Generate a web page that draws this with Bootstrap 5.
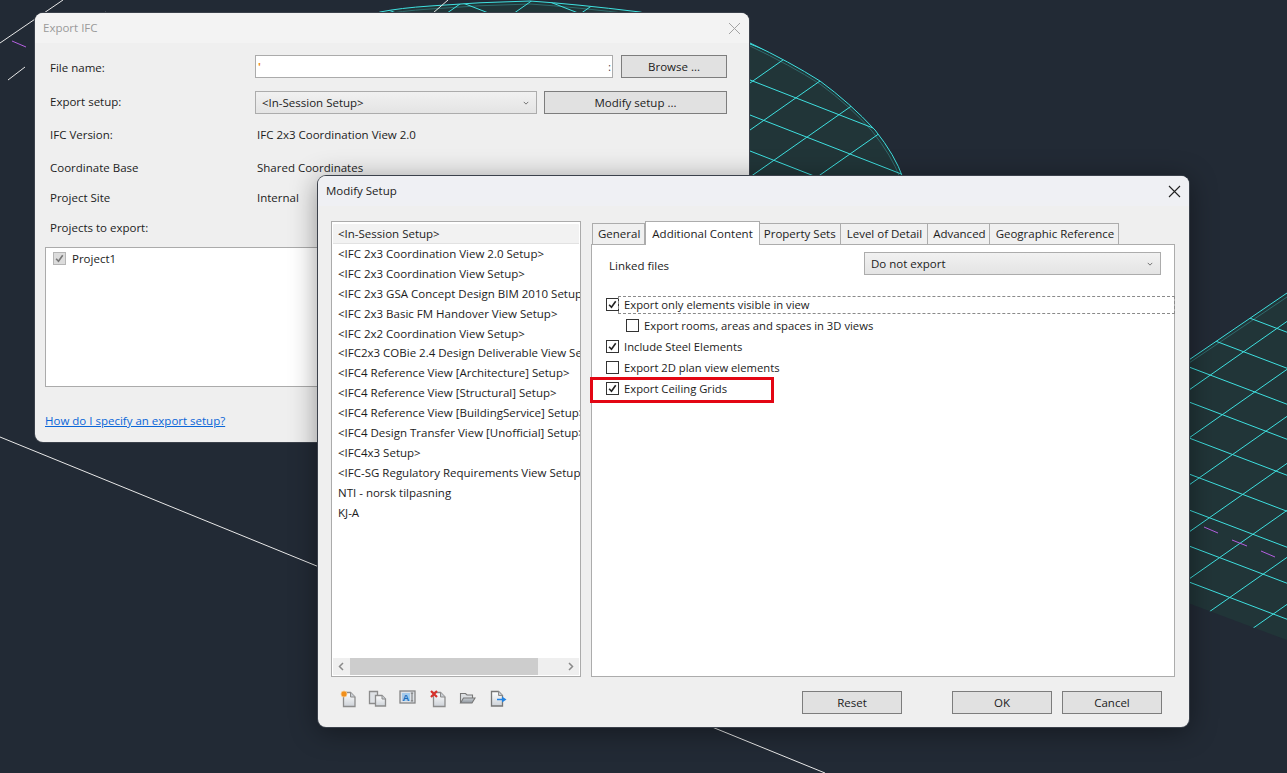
<!DOCTYPE html>
<html lang="en">
  <head>
    <meta charset="UTF-8" />
    <title>Export IFC - Modify Setup</title>
    <link
      href="https://cdn.jsdelivr.net/npm/bootstrap@5.3.0/dist/css/bootstrap.min.css"
      rel="stylesheet"
    />
    <style>
      html, body { margin: 0; background: #222a35; }
      body {
        font-family: "Open Sans", "Noto Sans", "Liberation Sans", sans-serif;
        font-size: 11.5px;
        line-height: 16px;
        color: #1c1c1c;
      }
      .desk { width: 1287px; height: 773px; overflow: hidden; }
      .model { left: 0; top: 0; }

      .win { background: #efefef; border-radius: 8px; }
      .win-back { left: 35px; top: 13px; width: 714px; height: 429px; box-shadow: 0 0 0 1px #3b414b; }
      .win-front { left: 318px; top: 176px; width: 871px; height: 551px; box-shadow: 0 0 0 1px #3b414b, 0 4px 28px rgba(0, 0, 0, .42); }
      .win-head { height: 30px; padding: 0 7px 0 8px; border-radius: 8px 8px 0 0; }
      .win-back .win-head { background: #f3f3f3; color: #9a9a9a; }
      .win-front .win-head { background: #eff0f4; color: #222; }
      .win-x { width: 15px; height: 15px; }

      .exp-body { padding: 12px 21px 0 10px; }
      .exp-row { height: 22px; }
      .exp-label { width: 210px; padding-left: 5px; flex: none; }
      .label-low { padding-top: 3px; }
      .label-high { padding-bottom: 2px; }
      .exp-value { padding-left: 2px; }
      .gap-file { margin-top: 13px; height: 23px; }
      .gap-a { margin-top: 10px; }
      .gap-b { margin-top: 11px; }
      .gap-c { margin-top: 8px; }
      .exp-file { width: 358px; height: 23px; background: #fff; border: 1px solid #ababab; padding: 0 1px 0 2px; }
      .caret-tick { color: #f08a10; font-size: 11px; font-weight: 700; }
      .caret-dots { color: #333; font-size: 10px; }

      .win-btn {
        height: 23px; padding: 0; font-size: 11.5px; line-height: 20px; color: #1c1c1c;
        background: #e1e1e1; border: 1px solid #7d7d7d; border-radius: 0;
      }
      .win-btn:hover { background: #e1e1e1; color: #1c1c1c; border-color: #7d7d7d; }
      .btn-browse { width: 106px; margin-left: 8px; }
      .btn-modify { width: 183px; margin-left: 7px; }
      .btn-dialog { width: 100px; }

      .win-select {
        height: 23px; padding: 0 20px 0 6px; font-size: 11.5px; line-height: 20px; color: #1c1c1c;
        border: 1px solid #acacac; border-radius: 0;
        background-color: #e8e8e8;
        background-image: url("data:image/svg+xml,%3Csvg xmlns='http://www.w3.org/2000/svg' viewBox='0 0 8 5'%3E%3Cpath d='M1 1l3 3 3-3' fill='none' stroke='%23666' stroke-width='1.2'/%3E%3C/svg%3E"), linear-gradient(#f1f1f1, #e4e4e4);
        background-repeat: no-repeat, no-repeat;
        background-position: right 7px center, 0 0;
        background-size: 6px 4px, 100% 100%;
      }
      .sel-setup { width: 282px; }
      .sel-linked { width: 297px; }

      .proj-box { height: 140px; background: #fff; border: 1px solid #ababab; margin-top: 8px; padding: 0 0 0 7px; }
      .proj-box .chk-line .form-check-input { margin-right: 6px; opacity: 1; }
      .help-link { display: block; margin-top: 26px; color: #0a66d8; }

      .set-body { padding: 15px 14px 0 13px; }
      .set-main { height: 456px; }
      .set-list { width: 250px; flex: none; margin-right: 10px; border: 1px solid #ababab; background: #fff; }
      .set-items { padding: 2px 1px 0; overflow: hidden; flex: 1 1 auto; }
      .set-items .list-group-item {
        background: transparent; border: 0; padding: 0 0 0 5px; height: 19.9px; line-height: 19.9px;
        white-space: nowrap; color: #1c1c1c; border-radius: 0; font-size: 11.5px;
      }
      .set-items .list-group-item.picked { background: #f2f2f2; border-bottom: 1px solid #e2e2e2; height: 20px; }
      .h-scroll { height: 17px; margin: 0 1px 1px; background: #efefef; }
      .h-thumb { width: 188px; background: #cdcdcd; }
      .h-arrow { width: 17px; }

      .set-tabs { flex: 1 1 auto; min-width: 0; }
      .tab-row { height: 23px; border: 0; padding-left: 1px; flex-wrap: nowrap; }
      .tab-row .nav-link {
        height: 21px; margin: 2px 0 0 0; padding: 0 4px; line-height: 19px; color: #1c1c1c; white-space: nowrap;
        background: #f0f0f0; border: 1px solid #acacac; border-bottom: 0; border-left-width: 0; border-radius: 0;
      }
      .tab-row .nav-link.tab-general { padding: 0 4px 0 5px; }
      .tab-row .nav-link.tab-level { padding: 0 5px 0 6px; }
      .tab-row .nav-link.tab-adv { padding: 0 3px 0 5px; }
      .tab-row .nav-link.tab-geo { padding: 0 4px 0 6px; }
      .tab-row .nav-item:first-child .nav-link { border-left-width: 1px; }
      .tab-row .nav-link.active {
        height: 24px; margin-top: 0; line-height: 23px; padding: 0 6px; position: relative; z-index: 1;
        background: #fff; border: 1px solid #acacac; border-bottom: 0; color: #1c1c1c;
      }
      .tab-body { height: 433px; background: #fff; border: 1px solid #acacac; padding: 7px 13px 0 17px; }
      .linked-row { height: 23px; }
      .linked-name { width: 76px; flex: none; padding-top: 4px; }
      .chk-list { margin: 19px -13px 0 -3px; }
      .chk-line { height: 21px; display: flex; align-items: center; margin: 0; padding: 0; min-height: 0; }
      .chk-line .form-check-input { float: none; margin: 0 5px 0 0; flex: none; }
      .chk-line.sub { padding-left: 20px; }
      .chk-text { flex: 1 1 auto; height: 16px; line-height: 15px; font-size: 11.25px; }
      .chk-text.focused { outline: 1px dashed #8a8a8a; margin-left: -5px; padding-left: 5px; }

      .form-check-input[type=checkbox] {
        width: 13px; height: 13px; border-radius: 0; border: 1px solid #333; background-color: #fff;
      }
      .form-check-input[type=checkbox]:checked {
        background-color: #fff; border-color: #333;
        background-image: url("data:image/svg+xml,%3Csvg xmlns='http://www.w3.org/2000/svg' viewBox='0 0 13 13'%3E%3Cpath d='M2.5 6.8l2.8 3 5-7.2' fill='none' stroke='%23222' stroke-width='1.9'/%3E%3C/svg%3E");
        background-size: 100% 100%;
      }
      .proj-box .form-check-input[type=checkbox]:checked {
        background-color: #dcdcdc; border-color: #b5b5b5;
        background-image: url("data:image/svg+xml,%3Csvg xmlns='http://www.w3.org/2000/svg' viewBox='0 0 13 13'%3E%3Cpath d='M2.5 6.8l2.8 3 5-7.2' fill='none' stroke='%23777' stroke-width='1.9'/%3E%3C/svg%3E");
      }
      .red-note { left: 272px; top: 201px; width: 184px; height: 26px; border: 3px solid #e30613; pointer-events: none; }

      .set-foot { height: 38px; padding: 12px 13px 0 6px; }
      .tool-set { gap: 10px; }
      .tool-ico { width: 20px; height: 20px; display: block; }
      .foot-btns { margin-top: 2px; }
      .foot-reset { margin-right: 50px; }
      .foot-ok { margin-right: 10px; }
    </style>
  </head>
  <body>
    <div class="desk position-relative">
      <!-- model drawn behind the dialogs -->
      <svg class="model position-absolute" id="model" width="1287" height="773" viewBox="0 0 1287 773">
        <defs>
          <clipPath id="clipRound"><path d="M340 30 L380 12 Q400 8 430 6 Q480 2 530 1 Q575 4 640 12 Q700 25 750 43 Q790 62 820 81 Q850 103 875 130 Q895 155 903 178 L903 300 L340 300 Z" /></clipPath>
          <clipPath id="clipSide"><path d="M1180 366 L1287 293 L1287 640 L1180 600 Z" /></clipPath>
          <linearGradient id="docFill" x1="0" y1="0" x2="0" y2="1">
            <stop offset="0" stop-color="#ffffff" />
            <stop offset="1" stop-color="#cdd2d8" />
          </linearGradient>
          <linearGradient id="folderFill" x1="0" y1="0" x2="0" y2="1">
            <stop offset="0" stop-color="#c9ced3" />
            <stop offset="1" stop-color="#8e969e" />
          </linearGradient>
        </defs>
        <path d="M340 30 L380 12 Q400 8 430 6 Q480 2 530 1 Q575 4 640 12 Q700 25 750 43 Q790 62 820 81 Q850 103 875 130 Q895 155 903 178 L903 300 L340 300 Z" fill="#213538" stroke="#3fe0e0" stroke-width="1" />
        <path d="M340 33 L380 15 Q400 11 430 9 Q480 5 530 4 Q575 7 640 15 Q700 28 750 46 Q790 65 820 84 Q850 106 872 131 Q892 156 900 178" fill="none" stroke="#2f6a6c" />
        <path d="M1180 366 L1287 293 L1287 640 L1180 600 Z" fill="#213538" />
        <path d="M1180 366 L1287 293" stroke="#3fe0e0" fill="none" />
        <path d="M1189 363 L1287 297" stroke="#2f6a6c" fill="none" />
        <g id="gridRound" clip-path="url(#clipRound)" stroke="#3fe0e0" stroke-width="1"></g>
        <g id="gridSide" clip-path="url(#clipSide)" stroke="#3fe0e0" stroke-width="1"></g>
        <g stroke="#e8e8e8" stroke-width="1" fill="none">
          <path d="M0 43 L63 0" />
          <path d="M8 80 L25 67" />
          <path d="M100 16 L106 12" />
          <path d="M448 0 L433 13" />
          <path d="M0 437 L825 773" />
        </g>
        <g stroke="#b45fe0" stroke-width="1" fill="none">
          <path d="M12 41 L26 47" />
          <path d="M1204 527 L1218 533" />
          <path d="M1232 540 L1247 546" />
          <path d="M1261 551 L1275 557" />
        </g>
      </svg>

      <!-- Export IFC -->
      <div class="win win-back position-absolute">
        <div class="win-head d-flex align-items-center justify-content-between">
          <span>Export IFC</span>
          <svg class="win-x" viewBox="0 0 15 15"><path d="M2 2l11 11M13 2L2 13" stroke="#a3a3a3" stroke-width="1" fill="none" /></svg>
        </div>
        <div class="exp-body">
          <div class="d-flex align-items-center gap-file mt-0">
            <div class="exp-label label-low">File name:</div>
            <div class="exp-file d-flex align-items-center justify-content-between">
              <span class="caret-tick">'</span><span class="caret-dots">:</span>
            </div>
            <button type="button" class="btn win-btn btn-browse">Browse ...</button>
          </div>
          <div class="d-flex align-items-center gap-file">
            <div class="exp-label label-high">Export setup:</div>
            <select class="form-select win-select sel-setup"><option>&lt;In-Session Setup&gt;</option></select>
            <button type="button" class="btn win-btn btn-modify">Modify setup ...</button>
          </div>
          <div class="d-flex align-items-center exp-row gap-a">
            <div class="exp-label">IFC Version:</div>
            <div class="exp-value">IFC 2x3 Coordination View 2.0</div>
          </div>
          <div class="d-flex align-items-center exp-row gap-b">
            <div class="exp-label">Coordinate Base</div>
            <div class="exp-value">Shared Coordinates</div>
          </div>
          <div class="d-flex align-items-center exp-row gap-c">
            <div class="exp-label">Project Site</div>
            <div class="exp-value">Internal</div>
          </div>
          <div class="d-flex align-items-center exp-row gap-c">
            <div class="exp-label">Projects to export:</div>
          </div>
          <div class="proj-box">
            <div class="chk-line">
              <input class="form-check-input" type="checkbox" checked disabled />
              <span>Project1</span>
            </div>
          </div>
          <a class="help-link" href="#">How do I specify an export setup?</a>
        </div>
      </div>

      <!-- Modify Setup -->
      <div class="win win-front position-absolute">
        <div class="win-head d-flex align-items-center justify-content-between">
          <span>Modify Setup</span>
          <svg class="win-x" viewBox="0 0 15 15"><path d="M2 2l11 11M13 2L2 13" stroke="#222" stroke-width="1.1" fill="none" /></svg>
        </div>
        <div class="set-body">
          <div class="d-flex set-main">
            <div class="set-list d-flex flex-column">
              <div class="list-group set-items">
                <div class="list-group-item picked">&lt;In-Session Setup&gt;</div>
                <div class="list-group-item">&lt;IFC 2x3 Coordination View 2.0 Setup&gt;</div>
                <div class="list-group-item">&lt;IFC 2x3 Coordination View Setup&gt;</div>
                <div class="list-group-item">&lt;IFC 2x3 GSA Concept Design BIM 2010 Setup&gt;</div>
                <div class="list-group-item">&lt;IFC 2x3 Basic FM Handover View Setup&gt;</div>
                <div class="list-group-item">&lt;IFC 2x2 Coordination View Setup&gt;</div>
                <div class="list-group-item">&lt;IFC2x3 COBie 2.4 Design Deliverable View Setup&gt;</div>
                <div class="list-group-item">&lt;IFC4 Reference View [Architecture] Setup&gt;</div>
                <div class="list-group-item">&lt;IFC4 Reference View [Structural] Setup&gt;</div>
                <div class="list-group-item">&lt;IFC4 Reference View [BuildingService] Setup&gt;</div>
                <div class="list-group-item">&lt;IFC4 Design Transfer View [Unofficial] Setup&gt;</div>
                <div class="list-group-item">&lt;IFC4x3 Setup&gt;</div>
                <div class="list-group-item">&lt;IFC-SG Regulatory Requirements View Setup&gt;</div>
                <div class="list-group-item">NTI - norsk tilpasning</div>
                <div class="list-group-item">KJ-A</div>
              </div>
              <div class="h-scroll d-flex align-items-stretch">
                <svg class="h-arrow" viewBox="0 0 17 17"><path d="M10 5l-3.5 3.5L10 12" fill="none" stroke="#8a8a8a" stroke-width="1.5" /></svg>
                <div class="h-thumb"></div>
                <svg class="h-arrow ms-auto" viewBox="0 0 17 17"><path d="M7 5l3.5 3.5L7 12" fill="none" stroke="#8a8a8a" stroke-width="1.5" /></svg>
              </div>
            </div>
            <div class="set-tabs">
              <ul class="nav nav-tabs tab-row">
                <li class="nav-item"><a class="nav-link tab-general" href="#">General</a></li>
                <li class="nav-item"><a class="nav-link active" href="#">Additional Content</a></li>
                <li class="nav-item"><a class="nav-link" href="#">Property Sets</a></li>
                <li class="nav-item"><a class="nav-link tab-level" href="#">Level of Detail</a></li>
                <li class="nav-item"><a class="nav-link tab-adv" href="#">Advanced</a></li>
                <li class="nav-item"><a class="nav-link tab-geo" href="#">Geographic Reference</a></li>
              </ul>
              <div class="tab-body">
                <div class="linked-row d-flex align-items-center justify-content-between">
                  <div class="linked-name">Linked files</div>
                  <select class="form-select win-select sel-linked"><option>Do not export</option></select>
                </div>
                <div class="chk-list">
                  <label class="chk-line">
                    <input class="form-check-input" type="checkbox" checked />
                    <span class="chk-text focused">Export only elements visible in view</span>
                  </label>
                  <label class="chk-line sub">
                    <input class="form-check-input" type="checkbox" />
                    <span class="chk-text">Export rooms, areas and spaces in 3D views</span>
                  </label>
                  <label class="chk-line">
                    <input class="form-check-input" type="checkbox" checked />
                    <span class="chk-text">Include Steel Elements</span>
                  </label>
                  <label class="chk-line">
                    <input class="form-check-input" type="checkbox" />
                    <span class="chk-text">Export 2D plan view elements</span>
                  </label>
                  <label class="chk-line">
                    <input class="form-check-input" type="checkbox" checked />
                    <span class="chk-text">Export Ceiling Grids</span>
                  </label>
                </div>
              </div>
            </div>
          </div>
          <div class="set-foot d-flex align-items-start">
            <div class="d-flex tool-set">
              <!-- new -->
              <svg class="tool-ico" viewBox="0 0 20 20">
                <path d="M6.5 3.5h7l4.500 4.500v9.500h-11.500z" fill="url(#docFill)" stroke="#8c8c8c" stroke-width="1.300" />
                <path d="M13.500 3.500v4.500h4.500" fill="#c9ced4" stroke="#8c8c8c" />
                <circle cx="7" cy="5" r="3" fill="#f08f1c" stroke="#f9c98a" stroke-width=".8" />
              </svg>
              <!-- copy -->
              <svg class="tool-ico" viewBox="0 0 20 20">
                <path d="M2.500 2.500h8v12h-8z" fill="#dfe2e6" stroke="#8c8c8c" stroke-width="1.300" />
                <path d="M8.500 6.500h6.500l3.500 3.500v7h-10z" fill="url(#docFill)" stroke="#8c8c8c" stroke-width="1.300" />
                <path d="M15 6.500v3.500h3.500" fill="#c9ced4" stroke="#8c8c8c" />
              </svg>
              <!-- rename -->
              <svg class="tool-ico" viewBox="0 0 20 20">
                <rect x="3" y="2" width="15" height="12" fill="#dfe3e8" stroke="#858585" stroke-width="1.300" />
                <rect x="5" y="4" width="8" height="8" fill="#a4cbec" />
                <text x="9" y="11.500" text-anchor="middle" font-family="Liberation Sans, sans-serif" font-size="9.500" font-weight="700" fill="#1c6dbb">A</text>
                <path d="M15 4v8M13.800 4h2.400M13.800 12h2.400" stroke="#666" stroke-width=".9" fill="none" />
              </svg>
              <!-- delete -->
              <svg class="tool-ico" viewBox="0 0 20 20">
                <path d="M6.500 3.500h7l4.500 4.500v9.500h-11.500z" fill="url(#docFill)" stroke="#8c8c8c" stroke-width="1.300" />
                <path d="M13.500 3.500v4.500h4.500" fill="#c9ced4" stroke="#8c8c8c" />
                <path d="M4 2l6 6M10 2L4 8" stroke="#d6322c" stroke-width="2.200" fill="none" />
              </svg>
              <!-- open -->
              <svg class="tool-ico" viewBox="0 0 20 20">
                <path d="M3.500 14V4.500h5l1.500 1.500h5.500V9" fill="#dcdfe2" stroke="#777" stroke-width="1.100" />
                <path d="M3.500 14l3-5h11.500l-3 5z" fill="url(#folderFill)" stroke="#777" stroke-width="1.100" />
              </svg>
              <!-- export -->
              <svg class="tool-ico" viewBox="0 0 20 20">
                <path d="M4.500 2.500h7l4 4v10.500h-11z" fill="url(#docFill)" stroke="#777" stroke-width="1.300" />
                <path d="M11.500 2.500v4h4" fill="#c9ced4" stroke="#8c8c8c" />
                <path d="M10 9.700h5v-2.200l4.500 3-4.500 3v-2.200h-5z" fill="#2383e2" />
              </svg>
            </div>
            <div class="foot-btns ms-auto d-flex">
              <button type="button" class="btn win-btn btn-dialog foot-reset">Reset</button>
              <button type="button" class="btn win-btn btn-dialog foot-ok">OK</button>
              <button type="button" class="btn win-btn btn-dialog">Cancel</button>
            </div>
          </div>
        </div>
        <div class="red-note position-absolute"></div>
      </div>
    </div>

    <script>
      // grid lines of the model, two families per surface
      function addLines(id, x0, x1, xRef, slope, offsets) {
        const g = document.getElementById(id);
        offsets.forEach((c) => {
          const l = document.createElementNS("http://www.w3.org/2000/svg", "line");
          l.setAttribute("x1", x0);
          l.setAttribute("y1", c + slope * (x0 - xRef));
          l.setAttribute("x2", x1);
          l.setAttribute("y2", c + slope * (x1 - xRef));
          g.appendChild(l);
        });
      }
      addLines("gridRound", 340, 910, 750, 0.39, [-64, -28, 8, 44, 80, 115, 151, 187]);
      addLines("gridRound", 340, 910, 750, -0.7, [-199, -152, -105, -58, -11, 36, 83, 130, 177, 224]);
      addLines("gridSide", 1180, 1287, 1189, 0.38, [295, 331, 367, 402, 438, 474, 510, 546, 582]);
      addLines("gridSide", 1180, 1287, 1189, -0.7, [390, 438, 485, 532, 579, 626, 673]);
    </script>
    <script src="https://cdn.jsdelivr.net/npm/bootstrap@5.3.0/dist/js/bootstrap.bundle.min.js"></script>
  </body>
</html>
